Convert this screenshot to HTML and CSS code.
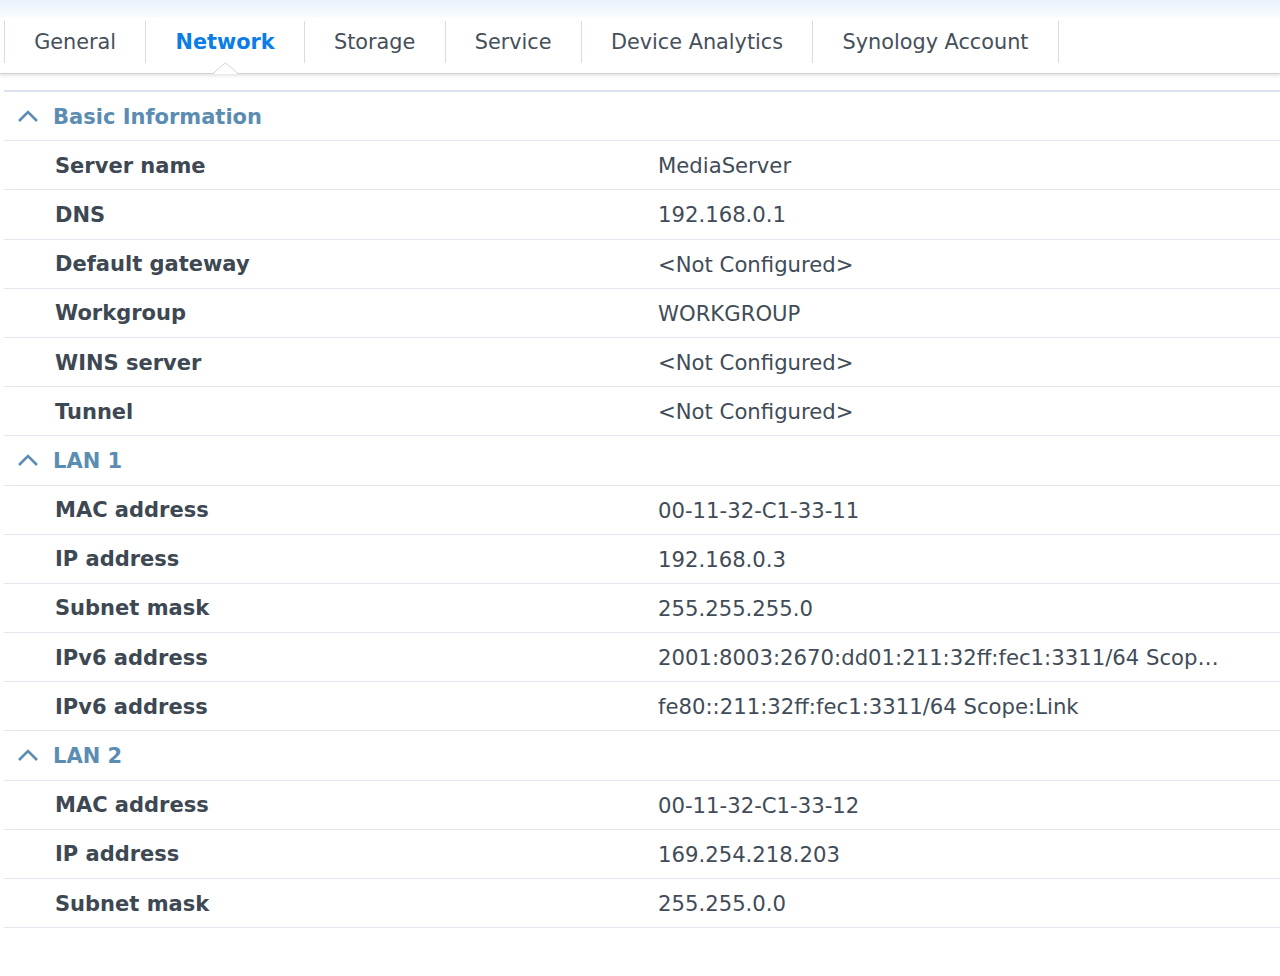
FILE: index.html
```html
<!DOCTYPE html>
<html>
<head>
    <title>Info Center</title>
    <link rel="stylesheet" href="styles.css">
</head>
<body>
    <div class="barra-alta"></div>
    <div class="schede">
        <div class="scheda">General</div>
        <div class="scheda attiva">Network
            <svg class="tacca" width="25" height="12" viewBox="0 0 25 12">
                <polygon points="0,12 12.5,1 25,12" fill="#fff"/>
                <polyline points="0,11.5 12.5,0.8 25,11.5" fill="none" stroke="#cfd4d9" stroke-width="1"/>
            </svg>
        </div>
        <div class="scheda">Storage</div>
        <div class="scheda">Service</div>
        <div class="scheda">Device Analytics</div>
        <div class="scheda ultima">Synology Account</div>
    </div>

    <div class="contenuto">
        <div class="sezione">
            <svg class="freccia" width="22" height="14" viewBox="0 0 22 14">
                <polyline points="2,12 11,3 20,12" fill="none" stroke="#5b8cb2" stroke-width="2.6"/>
            </svg>
            Basic Information
        </div>
        <div class="riga"><div class="etichetta">Server name</div><div class="valore">MediaServer</div></div>
        <div class="riga"><div class="etichetta">DNS</div><div class="valore">192.168.0.1</div></div>
        <div class="riga"><div class="etichetta">Default gateway</div><div class="valore">&lt;Not Configured&gt;</div></div>
        <div class="riga"><div class="etichetta">Workgroup</div><div class="valore">WORKGROUP</div></div>
        <div class="riga"><div class="etichetta">WINS server</div><div class="valore">&lt;Not Configured&gt;</div></div>
        <div class="riga"><div class="etichetta">Tunnel</div><div class="valore">&lt;Not Configured&gt;</div></div>

        <div class="sezione">
            <svg class="freccia" width="22" height="14" viewBox="0 0 22 14">
                <polyline points="2,12 11,3 20,12" fill="none" stroke="#5b8cb2" stroke-width="2.6"/>
            </svg>
            LAN 1
        </div>
        <div class="riga"><div class="etichetta">MAC address</div><div class="valore">00-11-32-C1-33-11</div></div>
        <div class="riga"><div class="etichetta">IP address</div><div class="valore">192.168.0.3</div></div>
        <div class="riga"><div class="etichetta">Subnet mask</div><div class="valore">255.255.255.0</div></div>
        <div class="riga"><div class="etichetta">IPv6 address</div><div class="valore troncato">2001:8003:2670:dd01:211:32ff:fec1:3311/64 Scope:Global</div></div>
        <div class="riga"><div class="etichetta">IPv6 address</div><div class="valore">fe80::211:32ff:fec1:3311/64 Scope:Link</div></div>

        <div class="sezione">
            <svg class="freccia" width="22" height="14" viewBox="0 0 22 14">
                <polyline points="2,12 11,3 20,12" fill="none" stroke="#5b8cb2" stroke-width="2.6"/>
            </svg>
            LAN 2
        </div>
        <div class="riga"><div class="etichetta">MAC address</div><div class="valore">00-11-32-C1-33-12</div></div>
        <div class="riga"><div class="etichetta">IP address</div><div class="valore">169.254.218.203</div></div>
        <div class="riga"><div class="etichetta">Subnet mask</div><div class="valore">255.255.0.0</div></div>
    </div>
</body>
</html>
```

FILE: styles.css
```css
* {
    box-sizing: border-box;
}
body {
    margin: 0;
    background-color: #fff;
    font-family: "DejaVu Sans", Verdana, sans-serif;
    color: #3d4853;
}
.barra-alta {
    height: 18px;
    background-image: linear-gradient(to bottom, #e9f1fb, #fbfdff);
}
.schede {
    display: flex;
    padding: 3px 0 10px 4px;
    border-bottom: 1px solid #cdd2d7;
    box-shadow: 0 2px 3px rgba(0, 0, 0, 0.10);
    position: relative;
}
.scheda {
    position: relative;
    height: 42px;
    line-height: 42px;
    padding: 0 29.2px;
    border-left: 1px solid #d4dde6;
    font-size: 20.8px;
    color: #46505a;
}
.scheda.ultima {
    border-right: 1px solid #d4dde6;
}
.scheda.attiva {
    color: #0b7de6;
    font-weight: bold;
}
.tacca {
    position: absolute;
    left: calc(50% - 12.5px);
    bottom: -11px;
    display: block;
}
.contenuto {
    margin: 16px 0 0 4px;
    border-top: 2px solid #dbe4ee;
}
.sezione {
    display: flex;
    align-items: center;
    height: 49.2px;
    border-bottom: 1px solid #e3e8ee;
    padding-left: 13px;
    padding-top: 1px;
    font-size: 21px;
    font-weight: bold;
    color: #5b8cb2;
}
.freccia {
    margin-right: 14px;
    margin-top: -2px;
}
.riga {
    display: flex;
    align-items: center;
    height: 49.2px;
    border-bottom: 1px solid #e3e8ee;
    padding-left: 51px;
    padding-top: 1px;
}
.etichetta {
    width: 603px;
    flex-shrink: 0;
    font-size: 21px;
    font-weight: bold;
    color: #3d4853;
}
.valore {
    font-size: 21.2px;
    color: #414c58;
    white-space: nowrap;
}
.valore.troncato {
    width: 566px;
    overflow: hidden;
    text-overflow: ellipsis;
}
```
